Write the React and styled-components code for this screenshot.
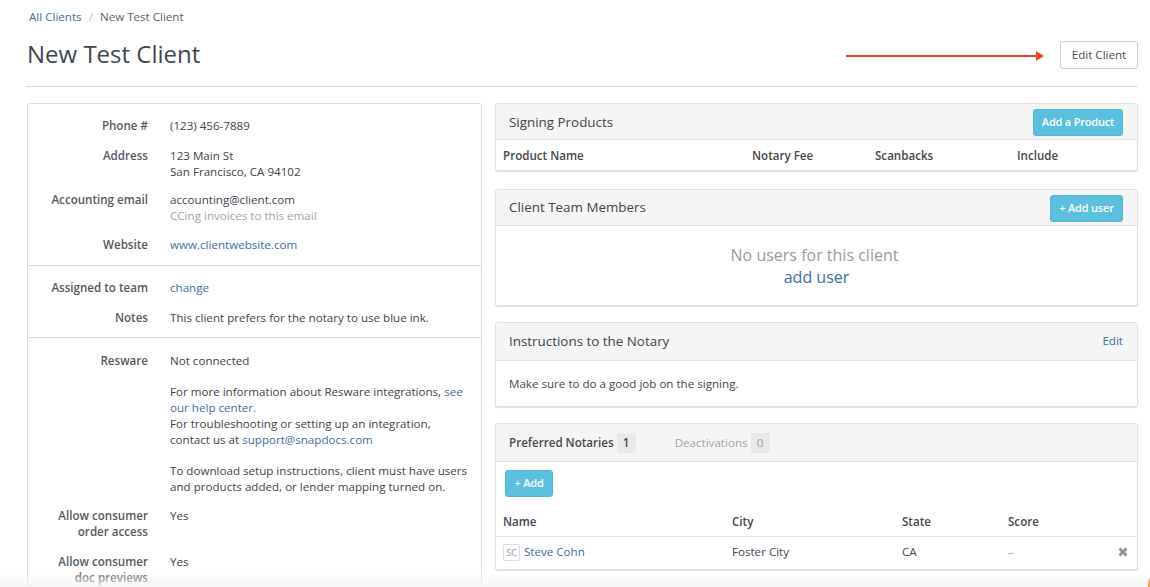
import React from 'react';
import styled, { createGlobalStyle } from 'styled-components';

const GlobalStyle = createGlobalStyle`
  html, body {
    margin: 0;
    padding: 0;
    height: 587px;
    overflow: hidden;
    background: #fff;
  }
  body {
    font-family: 'Open Sans', 'Liberation Sans', sans-serif;
    font-size: 11.6px;
    line-height: 16px;
    color: #3f444a;
  }
  * {
    box-sizing: border-box;
  }
`;

const Page = styled.div`
  position: relative;
  width: 1150px;
  height: 587px;
  padding: 9px 12px 0 26px;
  overflow: hidden;
`;
const BottomFade = styled.div`
  position: absolute;
  left: 0;
  right: 0;
  bottom: 0;
  height: 16px;
  background: linear-gradient(to bottom, rgba(245, 245, 245, 0), rgba(245, 245, 245, 0.9));
  pointer-events: none;
`;
const ChatBubble = styled.div`
  position: absolute;
  left: 1148px;
  top: 570px;
  width: 30px;
  height: 30px;
  border-radius: 50%;
  background: #e8a04c;
`;
const Link = styled.a`
  color: #3a6ea5;
  text-decoration: none;
`;
const Breadcrumb = styled.div`
  display: flex;
  gap: 7px;
  padding-left: 3px;
  color: #5a5f66;
`;
const Slash = styled.span`
  color: #b5b5b5;
`;
const Header = styled.div`
  display: flex;
  align-items: center;
  justify-content: space-between;
  height: 62px;
  border-bottom: 1px solid #dddddd;
  margin-bottom: 16px;
`;
const Title = styled.h1`
  margin: 0 0 3px 1px;
  font-size: 24px;
  line-height: 32px;
  font-weight: 400;
  color: #3f4650;
`;
const HeaderActions = styled.div`
  display: flex;
  align-items: center;
  gap: 16px;
  margin-bottom: 1px;
`;
const Arrow = styled.svg`
  display: block;
  width: 198px;
  height: 10px;
  margin-top: 1px;
`;
const EditButton = styled.button`
  width: 78px;
  height: 28px;
  padding: 0;
  background: #fff;
  border: 1px solid #cfcfcf;
  border-radius: 3px;
  font: inherit;
  color: #4a4f55;
`;
const Columns = styled.div`
  display: grid;
  grid-template-columns: 455px 643px;
  gap: 13px;
  margin-left: 1px;
  align-items: start;
`;
const InfoCard = styled.div`
  border: 1px solid #dddddd;
  border-radius: 3px;
  background: #fff;
`;
const InfoSection = styled.div`
  display: flex;
  flex-direction: column;
  gap: ${p => p.$gap}px;
  padding: ${p => p.$pad};
  & + & {
    border-top: 1px solid #dddddd;
  }
`;
const InfoRow = styled.div`
  display: grid;
  grid-template-columns: 120px 1fr;
  column-gap: 22px;
  margin-top: ${p => p.$top || 0}px;
`;
const Label = styled.div`
  text-align: right;
  font-weight: 600;
  color: #555a60;
`;
const Value = styled.div`
  max-width: 300px;
`;
const Muted = styled.div`
  color: #a3a3a3;
`;
const Gap = styled.div`
  height: ${p => p.$height}px;
`;
const RightColumn = styled.div`
  display: flex;
  flex-direction: column;
`;
const Panel = styled.div`
  height: ${p => p.$height}px;
  margin-bottom: ${p => p.$mb}px;
  border: 1px solid #e2e2e2;
  border-radius: 3px;
  box-shadow: 0 1px 1px rgba(0, 0, 0, 0.14);
  background: #fff;
  overflow: hidden;
`;
const PanelHeader = styled.div`
  display: flex;
  align-items: center;
  justify-content: space-between;
  height: ${p => p.$height}px;
  padding: 0 14px 0 13px;
  background: #f5f5f5;
  border-bottom: 1px solid #e2e2e2;
  font-size: 13.4px;
  color: #40454b;
`;
const PanelTitle = styled.span`
  margin-bottom: ${p => (p.$lift ? 2 : 0)}px;
`;
const HeaderLink = styled(Link)`
  font-size: 11.6px;
  margin-bottom: 2px;
`;
const InfoButton = styled.button`
  height: 27px;
  width: ${p => p.$width}px;
  margin-top: ${p => p.$top || 0}px;
  padding: 0 0 ${p => p.$textLift || 0}px;
  background: #5bc0de;
  border: 1px solid #52b6d6;
  border-radius: 3px;
  color: #fff;
  font: 600 11px 'Open Sans', sans-serif;
  letter-spacing: -0.2px;
`;
const ColumnRow = styled.div`
  display: grid;
  grid-template-columns: ${p => p.$cols};
  align-items: center;
  height: ${p => p.$height}px;
  padding-left: 7px;
  padding-bottom: ${p => (p.$head ? 4 : 0)}px;
  font-weight: ${p => (p.$bold ? 600 : 400)};
  color: #44494f;
  border-bottom: ${p => (p.$head ? '1px solid #e2e2e2' : '0')};
`;
const EmptyState = styled.div`
  padding-top: 18px;
  text-align: center;
  font-size: 16px;
  line-height: 22px;
  color: #9b9b9b;
`;
const EmptyText = styled.span`
  margin-left: -4px;
`;
const PanelBody = styled.div`
  padding: 15px 13px;
  color: #44494f;
`;
const Tabs = styled.div`
  display: flex;
  align-items: center;
  gap: 39px;
  font-size: 11.6px;
`;
const Tab = styled.div`
  display: flex;
  align-items: center;
  gap: 3px;
  font-weight: ${p => (p.$active ? 600 : 400)};
  color: ${p => (p.$active ? '#44494f' : '#a3a3a3')};
`;
const Count = styled.span`
  display: block;
  width: 19px;
  height: 20px;
  background: #e9e9e9;
  border-radius: 2px;
  text-align: center;
  line-height: 20px;
`;
const AddRow = styled.div`
  padding: 8px 0 0 9px;
  height: 49px;
`;
const NameCell = styled.div`
  display: flex;
  align-items: center;
  gap: 4px;
`;
const Avatar = styled.span`
  display: block;
  width: 17px;
  height: 17px;
  border: 1px solid #dddddd;
  border-radius: 2px;
  font-size: 9px;
  line-height: 15px;
  letter-spacing: -0.4px;
  text-align: center;
  color: #999;
`;
const Dash = styled.span`
  color: #a3a3a3;
`;
const RemoveIcon = styled.svg`
  display: block;
  width: 10px;
  height: 10px;
  justify-self: end;
  margin-right: 9px;
`;

const App = () => (
  <Page>
    <GlobalStyle />
    <Breadcrumb>
      <Link>All Clients</Link>
      <Slash>/</Slash>
      <span>New Test Client</span>
    </Breadcrumb>
    <Header>
      <Title>New Test Client</Title>
      <HeaderActions>
        <Arrow viewBox="0 0 198 10">
          <rect x="0" y="4" width="191" height="2" fill="#e8432e" />
          <path d="M190 0 L198 5 L190 10 Z" fill="#e8432e" />
        </Arrow>
        <EditButton>Edit Client</EditButton>
      </HeaderActions>
    </Header>
    <Columns>
      <InfoCard>
        <InfoSection $gap={13} $pad="14px 0 12px 0">
          <InfoRow>
            <Label>Phone #</Label>
            <div>(123) 456-7889</div>
          </InfoRow>
          <InfoRow $top={1}>
            <Label>Address</Label>
            <div>
              123 Main St
              <br />
              San Francisco, CA 94102
            </div>
          </InfoRow>
          <InfoRow $top={-1}>
            <Label>Accounting email</Label>
            <div>
              accounting@client.com
              <Muted>CCing invoices to this email</Muted>
            </div>
          </InfoRow>
          <InfoRow>
            <Label>Website</Label>
            <Link>www.clientwebsite.com</Link>
          </InfoRow>
        </InfoSection>
        <InfoSection $gap={14} $pad="14px 0 11px 0">
          <InfoRow>
            <Label>Assigned to team</Label>
            <Link>change</Link>
          </InfoRow>
          <InfoRow>
            <Label>Notes</Label>
            <div>This client prefers for the notary to use blue ink.</div>
          </InfoRow>
        </InfoSection>
        <InfoSection $gap={13} $pad="15px 0 0 0">
          <InfoRow>
            <Label>Resware</Label>
            <Value>
              Not connected
              <Gap $height={15} />
              For more information about Resware integrations, <Link>see our help center.</Link>
              <br />
              For troubleshooting or setting up an integration, contact us at{' '}
              <Link>support@snapdocs.com</Link>
              <Gap $height={15} />
              To download setup instructions, client must have users and products added, or lender
              mapping turned on.
            </Value>
          </InfoRow>
          <InfoRow>
            <Label>
              Allow consumer
              <br />
              order access
            </Label>
            <div>Yes</div>
          </InfoRow>
          <InfoRow $top={1}>
            <Label>
              Allow consumer
              <br />
              doc previews
            </Label>
            <div>Yes</div>
          </InfoRow>
        </InfoSection>
      </InfoCard>
      <RightColumn>
        <Panel $height={68} $mb={18}>
          <PanelHeader $height={36}>
            <PanelTitle>Signing Products</PanelTitle>
            <InfoButton $width={90} $top={1} $textLift={1}>Add a Product</InfoButton>
          </PanelHeader>
          <ColumnRow $cols="249px 123px 142px 1fr" $height={31} $bold>
            <span>Product Name</span>
            <span>Notary Fee</span>
            <span>Scanbacks</span>
            <span>Include</span>
          </ColumnRow>
        </Panel>
        <Panel $height={117} $mb={16}>
          <PanelHeader $height={36}>
            <PanelTitle $lift>Client Team Members</PanelTitle>
            <InfoButton $width={73} $top={1} $textLift={2}>+ Add user</InfoButton>
          </PanelHeader>
          <EmptyState>
            <EmptyText>No users for this client</EmptyText>
            <br />
            <Link>add user</Link>
          </EmptyState>
        </Panel>
        <Panel $height={85} $mb={16}>
          <PanelHeader $height={38}>
            <PanelTitle $lift>Instructions to the Notary</PanelTitle>
            <HeaderLink>Edit</HeaderLink>
          </PanelHeader>
          <PanelBody>Make sure to do a good job on the signing.</PanelBody>
        </Panel>
        <Panel $height={147} $mb={0}>
          <PanelHeader $height={38}>
            <Tabs>
              <Tab $active>
                Preferred Notaries <Count>1</Count>
              </Tab>
              <Tab>
                Deactivations <Count>0</Count>
              </Tab>
            </Tabs>
          </PanelHeader>
          <AddRow>
            <InfoButton $width={48} $textLift={2}>+ Add</InfoButton>
          </AddRow>
          <ColumnRow $cols="229px 170px 106px 105px 1fr" $height={26} $head $bold>
            <span>Name</span>
            <span>City</span>
            <span>State</span>
            <span>Score</span>
          </ColumnRow>
          <ColumnRow $cols="229px 170px 106px 105px 1fr" $height={30}>
            <NameCell>
              <Avatar>SC</Avatar>
              <Link>Steve Cohn</Link>
            </NameCell>
            <span>Foster City</span>
            <span>CA</span>
            <Dash>–</Dash>
            <RemoveIcon viewBox="0 0 10 10">
              <path d="M1.5 1.5 L8.5 8.5 M8.5 1.5 L1.5 8.5" stroke="#8f8f8f" strokeWidth="2.6" />
            </RemoveIcon>
          </ColumnRow>
        </Panel>
      </RightColumn>
    </Columns>
    <BottomFade />
    <ChatBubble />
  </Page>
);

export default App;
